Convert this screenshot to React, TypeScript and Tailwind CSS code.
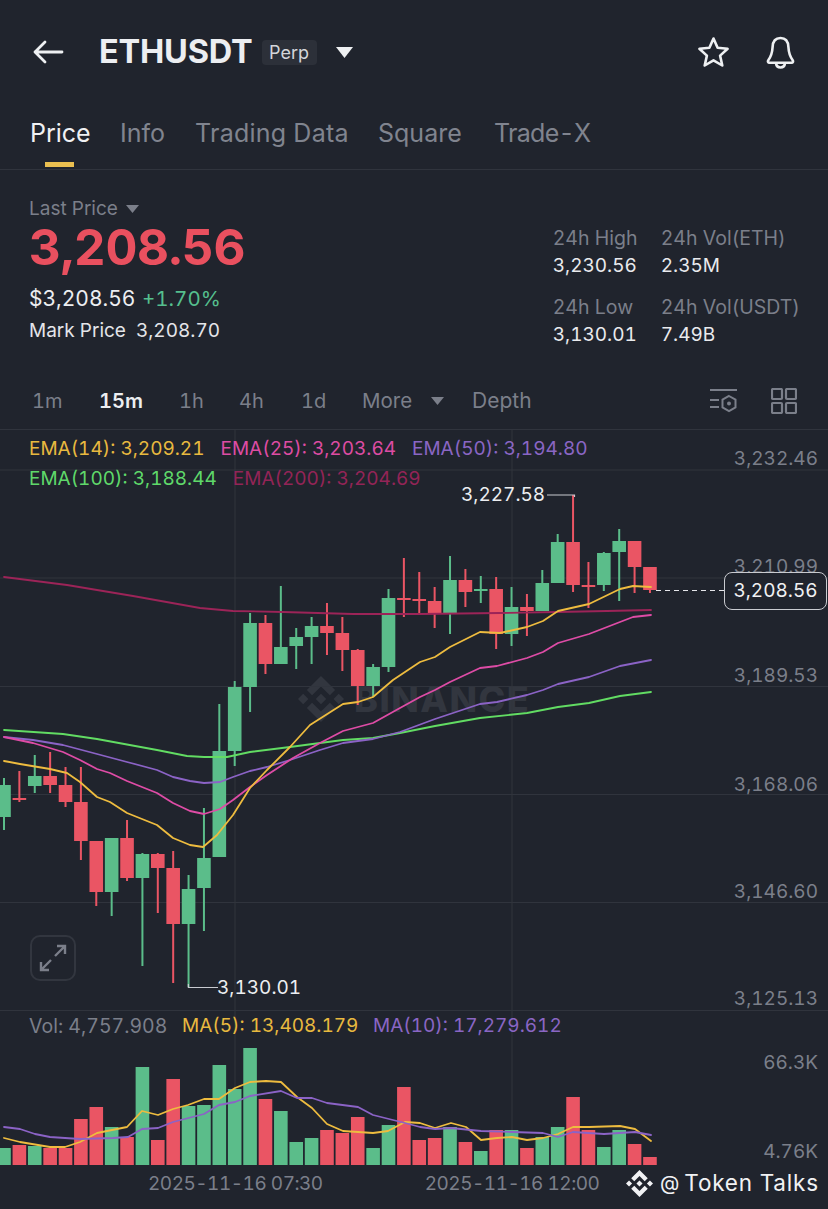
import { SiBinance } from "react-icons/si";

const G = "#5bbd8a";
const R = "#ea5564";
type C = [number, number, number, number, number];
// body-top, body-bottom, wick-top, wick-bottom, isGreen
const candles: C[] = [
  [785, 817, 778, 830, 1], [798, 800, 771, 802, 0], [776, 786, 755, 793, 1], [776, 785, 752, 793, 0],
  [785, 802, 767, 807, 0], [802, 841, 767, 860, 0], [841, 892, 841, 906, 0], [838, 892, 838, 916, 1],
  [838, 878, 820, 881, 0], [854, 878, 853, 966, 1], [854, 868, 853, 913, 0], [868, 924, 851, 983, 0],
  [889, 924, 875, 987, 1], [858, 888, 808, 931, 1], [751, 857, 704, 857, 1], [687, 751, 681, 766, 1],
  [623, 687, 613, 712, 1], [623, 664, 615, 674, 0], [647, 664, 586, 664, 1], [637, 646, 628, 669, 1],
  [626, 637, 617, 664, 1], [626, 633, 603, 655, 0], [633, 650, 617, 671, 0], [650, 686, 649, 705, 0],
  [667, 686, 664, 697, 1], [598, 667, 589, 672, 1], [598, 600, 558, 617, 0], [599, 601, 572, 613, 0],
  [601, 613, 587, 628, 0], [580, 613, 556, 634, 1], [580, 592, 569, 607, 0], [589, 591, 576, 603, 1],
  [589, 634, 577, 649, 0], [607, 634, 587, 646, 1], [607, 611, 594, 636, 0], [583, 611, 570, 611, 1],
  [542, 583, 534, 583, 1], [542, 585, 495, 592, 0], [585, 587, 562, 608, 0], [553, 585, 552, 591, 1],
  [541, 552, 529, 601, 1], [541, 567, 541, 593, 0], [567, 590, 567, 593, 0],
];
const volTops = [
  1148, 1145, 1146, 1148, 1148, 1119, 1107, 1127, 1137, 1067, 1140, 1079, 1106, 1105, 1065, 1089, 1048, 1099, 1111,
  1142, 1138, 1130, 1133, 1117, 1148, 1125, 1087, 1140, 1138, 1127, 1142, 1151, 1130, 1130, 1148, 1137, 1127, 1097,
  1130, 1147, 1130, 1144, 1157,
];
const xOf = (i: number) => 4 + i * 15.38;

const ema14 = "4,761 20,764 50,769 67,773 80,782 97,797 110,802 127,813 157,825 173,838 190,845 203,847 217,835 233,815 250,788 267,770 290,747 310,725 343,704 358,702 373,697 393,680 420,662 435,657 450,647 480,632 500,633 527,627 543,621 558,611 589,604 620,589 633,586 651,587";
const ema25 = "4,737 33,743 63,752 80,760 97,769 110,773 127,781 157,793 173,803 190,811 204,814 220,809 233,800 250,787 267,775 293,758 320,743 343,731 373,723 400,708 420,697 435,690 450,682 480,668 497,666 527,658 543,652 558,643 589,634 620,622 633,617 651,615";
const ema50 = "4,737 33,740 63,745 97,754 127,762 157,770 173,777 190,781 204,783 220,782 233,777 250,771 267,767 290,760 320,750 343,743 373,739 400,732 435,719 480,704 497,702 527,695 543,690 558,684 589,677 620,666 651,660";
const ema100 = "4,730 63,734 97,739 157,750 187,756 204,757 227,757 250,752 290,747 320,743 343,740 373,738 400,733 435,726 480,718 527,713 558,707 589,703 620,696 651,692";
const ema200 = "4,577 67,585 133,596 200,608 233,611 283,612 353,614 420,614 500,613 557,612 607,611 651,610";
const ma5 = "4,1138 20,1142 50,1147 65,1147 80,1142 97,1133 127,1127 142,1111 158,1115 173,1109 188,1105 204,1099 219,1099 235,1088 250,1082 266,1081 281,1082 297,1097 312,1108 327,1124 343,1131 373,1133 388,1131 405,1122 420,1123 435,1128 451,1123 466,1127 481,1140 497,1138 512,1137 527,1140 543,1138 558,1134 573,1127 589,1127 620,1126 635,1129 651,1141";
const ma10 = "4,1127 20,1129 35,1134 50,1137 80,1139 113,1138 128,1137 142,1129 158,1128 173,1122 204,1114 219,1105 235,1102 250,1096 281,1091 297,1098 312,1098 327,1103 358,1107 373,1115 405,1123 420,1127 435,1129 451,1128 481,1131 512,1132 543,1133 558,1137 573,1132 604,1134 635,1132 651,1135";

function Chart() {
  return (
    <svg className="absolute inset-0 h-[735px] w-[828px]" viewBox="0 430 828 735" fill="none">
      {[470, 578, 686.5, 794.5, 902.5].map((y) => (
        <line key={y} x1="0" x2="828" y1={y} y2={y} stroke="#30343d" strokeWidth="1" />
      ))}
      <line x1="235" x2="235" y1="430" y2="1165" stroke="#30343d" />
      <line x1="512" x2="512" y1="430" y2="1165" stroke="#30343d" />
      <line x1="0" x2="828" y1="1010.5" y2="1010.5" stroke="#30343d" />
      <line x1="0" x2="828" y1="1165.5" y2="1165.5" stroke="#30343d" />

      {candles.map(([t, b, wt, wb, g], i) => (
        <g key={i} fill={g ? G : R}>
          <rect x={xOf(i) - 1} y={wt} width="2" height={wb - wt} />
          <rect x={xOf(i) - 6.8} y={t} width="13.6" height={b - t} />
        </g>
      ))}

      <g strokeWidth="1.800" strokeLinejoin="round" strokeLinecap="round">
        <polyline points={ema200} stroke="#9c2458" />
        <polyline points={ema100} stroke="#62dc63" />
        <polyline points={ema50} stroke="#8b63c6" />
        <polyline points={ema25} stroke="#de4ca6" />
        <polyline points={ema14} stroke="#eebc3f" />
      </g>

      <path d="M547 495H574.500V497" stroke="#c8cad0" strokeWidth="1.200" />
      <path d="M188.400 984V987.500H218" stroke="#c8cad0" strokeWidth="1.200" />
      <line x1="656" x2="724" y1="590.5" y2="590.5" stroke="#e5e6ea" strokeWidth="1" strokeDasharray="5 4" />

      {volTops.map((t, i) => (
        <rect key={i} x={xOf(i) - 6.8} y={t} width="13.6" height={1165 - t} fill={candles[i][4] ? G : R} />
      ))}
      <g strokeWidth="1.800" strokeLinejoin="round" strokeLinecap="round">
        <polyline points={ma5} stroke="#eebc3f" />
        <polyline points={ma10} stroke="#8b63c6" />
      </g>
    </svg>
  );
}

const Tab = ({ label, active, className }: { label: string; active?: boolean; className: string }) => (
  <div className={`relative whitespace-nowrap text-[25px] leading-[30px] ${active ? "text-[#f0f1f3]" : "text-[#80848f]"} ${className}`}>
    {label}
    {active && <div className="absolute left-[15px] top-[44px] h-[5px] w-[29px] bg-[#eabf50]" />}
  </div>
);

const Stat = ({ label, value }: { label: string; value: string }) => (
  <div className="flex flex-col">
    <div className="whitespace-nowrap text-[19.500px] leading-[27px] text-[#7b7f8a]">{label}</div>
    <div className="whitespace-nowrap text-[19px] leading-[27px] text-[#e9eaed]">{value}</div>
  </div>
);

const Frame = ({ label, className }: { label: string; className: string }) => (
  <div className={`leading-[26px] ${className}`}>{label}</div>
);

const Y = ({ label, className }: { label: string; className: string }) => (
  <div className={`absolute right-[10px] text-[19px] leading-[24px] text-[#7b7f8a] ${className}`}>{label}</div>
);

export default function App() {
  return (
    <div className="h-[1209px] w-[828px] overflow-hidden bg-[#20242d] font-['Inter',sans-serif] tabular-nums">
      {/* Header */}
      <div className="flex h-[104px] items-center pl-[33px] pr-[32px]">
        <svg width="31" height="24" viewBox="0 0 31 24" fill="none" stroke="#eef0f2" strokeWidth="2.800" strokeLinecap="round" strokeLinejoin="round">
          <path d="M12 2L2 12l10 10M2 12h27" />
        </svg>
        <div className="ml-[35px] text-[32.500px] font-bold leading-[40px] tracking-[-0.200px] text-[#eceef1]">ETHUSDT</div>
        <div className="ml-[9px] flex h-[25px] w-[55px] items-center justify-center rounded-[4px] bg-[#2c3039] text-[18px] text-[#d4d6da]">Perp</div>
        <svg className="ml-[19px]" width="17" height="11" viewBox="0 0 17 11">
          <path d="M0 0h17l-8.500 11z" fill="#eef0f2" />
        </svg>
        <div className="flex-1" />
        <svg width="33" height="32" viewBox="0 0 33 32" fill="none" stroke="#eef0f2" strokeWidth="2.600" strokeLinejoin="round">
          <path d="M16.500 2.500l4.100 9.300 10 1-7.500 6.800 2.200 9.900-8.800-5.200-8.800 5.200 2.200-9.900L2.400 12.800l10-1z" />
        </svg>
        <svg className="ml-[35px]" width="31" height="33" viewBox="0 0 31 33" fill="none" stroke="#eef0f2" strokeWidth="2.600" strokeLinejoin="round">
          <path d="M15.500 2C9.800 2 7.800 6.500 7.600 11c-.3 6-1.200 9-4.300 13.200-.9 1.200-.2 2.500 1.200 2.500h22c1.400 0 2.100-1.300 1.200-2.500C24.600 20 23.700 17 23.400 11 23.200 6.500 21.200 2 15.500 2z" />
          <path d="M11 27c.3 3 2.200 4.500 4.500 4.500S19.700 30 20 27" />
        </svg>
      </div>

      {/* Tabs */}
      <div className="flex h-[66px] items-start border-b border-[#30343d] pl-[30px] pt-[14px]">
        <Tab label="Price" active className="w-[90px]" />
        <Tab label="Info" className="w-[75px]" />
        <Tab label="Trading Data" className="w-[183px] tracking-[0.250px]" />
        <Tab label="Square" className="w-[116px]" />
        <Tab label="Trade-X" className="tracking-[-0.700px]" />
      </div>

      {/* Price block */}
      <div className="flex h-[200px] justify-between pl-[29px] pr-[28px] pt-[26px]">
        <div className="flex flex-col">
          <div className="flex items-center gap-[8px] text-[19px] leading-[26px] text-[#7b7f8a]">
            Last Price
            <svg width="13" height="8" viewBox="0 0 13 8"><path d="M0 0h13L6.500 8z" fill="#7b7f8a" /></svg>
          </div>
          <div className="mt-[3px] text-[49.500px] font-bold leading-[44px] tracking-[-0.300px] text-[#e9505f]">3,208.56</div>
          <div className="mt-[17px] flex items-center text-[21px] leading-[26px]">
            <span className="w-[113px] text-[#eceef1]">$3,208.56</span>
            <span className="text-[20.500px] text-[#55bf8e]">+1.70%</span>
          </div>
          <div className="mt-[6px] flex gap-[10px] text-[19px] leading-[26px] text-[#e4e5e9]">
            <span>Mark Price</span>
            <span>3,208.70</span>
          </div>
        </div>
        <div className="grid grid-cols-[108px_auto] content-start gap-y-[15px] pt-[29px]">
          <Stat label="24h High" value="3,230.56" />
          <Stat label="24h Vol(ETH)" value="2.35M" />
          <Stat label="24h Low" value="3,130.01" />
          <Stat label="24h Vol(USDT)" value="7.49B" />
        </div>
      </div>

      {/* Timeframes */}
      <div className="flex h-[60px] items-center border-b border-[#30343d] pl-[32px] pr-[31px] pt-[2px]">
        <Frame label="1m" className="w-[67px] text-[20px] text-[#7b7f8a]" />
        <Frame label="15m" className="w-[80px] text-[20px] font-semibold text-[#eceef1]" />
        <Frame label="1h" className="w-[60px] text-[20px] text-[#7b7f8a]" />
        <Frame label="4h" className="w-[62px] text-[20px] text-[#7b7f8a]" />
        <Frame label="1d" className="w-[61px] text-[20px] text-[#7b7f8a]" />
        <Frame label="More" className="w-[69px] text-[20.500px] text-[#7b7f8a]" />
        <svg width="13" height="8" viewBox="0 0 13 8"><path d="M0 0h13L6.500 8z" fill="#7b7f8a" /></svg>
        <Frame label="Depth" className="ml-[28px] text-[21px] text-[#7b7f8a]" />
        <div className="flex-1" />
        <svg width="28" height="26" viewBox="0 0 28 26" fill="none" stroke="#7b7f8a" strokeWidth="2">
          <path d="M0 2h27M0 12h9M0 19h9" />
          <path d="M19 8l6.500 3.600v7.800L19 23l-6.500-3.600v-7.800z" />
          <circle cx="19" cy="15.500" r="2" fill="#7b7f8a" stroke="none" />
        </svg>
        <svg className="ml-[33px]" width="26" height="26" viewBox="0 0 26 26" fill="none" stroke="#7b7f8a" strokeWidth="2.200">
          <rect x="1" y="1" width="10" height="10" rx="1" />
          <rect x="15" y="1" width="10" height="10" rx="1" />
          <rect x="1" y="15" width="10" height="10" rx="1" />
          <rect x="15" y="15" width="10" height="10" rx="1" />
        </svg>
      </div>

      {/* Chart */}
      <div className="relative h-[735px] w-[828px]">
        <div className="absolute left-[298px] top-[246px] flex items-center gap-[10px] text-[#32363f]">
          <SiBinance size={46} />
          <span className="text-[36px] font-extrabold leading-[46px] tracking-[1.500px]">BINANCE</span>
        </div>
        <Chart />

        <div className="relative flex flex-col gap-[6px] pl-[29px] pt-[7px] text-[19px] leading-[24px]">
          <div className="flex gap-[16px]">
            <span className="text-[#e8b93f]">EMA(14): 3,209.21</span>
            <span className="text-[#dd4ca3]">EMA(25): 3,203.64</span>
            <span className="text-[#8a66c4]">EMA(50): 3,194.80</span>
          </div>
          <div className="flex gap-[16px]">
            <span className="text-[#5fd86a]">EMA(100): 3,188.44</span>
            <span className="text-[#932457]">EMA(200): 3,204.69</span>
          </div>
        </div>

        <Y label="3,232.46" className="top-[17px]" />
        <Y label="3,210.99" className="top-[125px]" />
        <Y label="3,189.53" className="top-[234px]" />
        <Y label="3,168.06" className="top-[343px]" />
        <Y label="3,146.60" className="top-[450px]" />
        <Y label="3,125.13" className="top-[557px]" />

        <div className="absolute left-[724px] top-[142px] flex h-[38px] w-[103px] items-center justify-center rounded-[8px] border border-[#c9cbd0] bg-[#20242d] text-[19px] text-[#f0f1f3]">
          3,208.56
        </div>
        <div className="absolute left-[461px] top-[53px] text-[19px] leading-[24px] text-[#eceef1]">3,227.58</div>
        <div className="absolute left-[217px] top-[546px] text-[19px] leading-[24px] text-[#eceef1]">3,130.01</div>

        <div className="absolute left-[30px] top-[505px] flex h-[46px] w-[46px] items-center justify-center rounded-[10px] border-2 border-[#32363f]">
          <svg width="28" height="28" viewBox="0 0 28 28" fill="none" stroke="#7b7f8a" strokeWidth="2.400">
            <path d="M16 12L26 2M18 2h8v8M12 16L2 26M2 18v8h8" />
          </svg>
        </div>

        <div className="absolute left-[29px] top-[584px] flex text-[19px] leading-[24px]">
          <span className="w-[153px] whitespace-nowrap text-[19.500px] text-[#7b7f8a]">Vol: 4,757.908</span>
          <span className="w-[191px] whitespace-nowrap text-[#e8b93f]">MA(5): 13,408.179</span>
          <span className="whitespace-nowrap text-[#8a66c4]">MA(10): 17,279.612</span>
        </div>
        <Y label="66.3K" className="top-[621px]" />
        <Y label="4.76K" className="top-[710px]" />
      </div>

      {/* Time axis */}
      <div className="relative flex h-[44px] items-center pb-[6px] text-[19px] leading-[26px] tracking-[-0.500px] text-[#7b7f8a]">
        <span className="ml-[148px] whitespace-nowrap">2025-11-16 07:30</span>
        <span className="ml-[102px] whitespace-nowrap">2025-11-16 12:00</span>
        <div className="absolute left-[626px] top-[3px] flex items-center whitespace-nowrap tracking-normal text-[#f1f2f4]">
          <SiBinance size={27} />
          <span className="ml-[7px] text-[20px] leading-[30px]">@</span>
          <span className="ml-[5px] text-[22.500px] leading-[30px] tracking-[0.800px]">Token Talks</span>
        </div>
      </div>
    </div>
  );
}
